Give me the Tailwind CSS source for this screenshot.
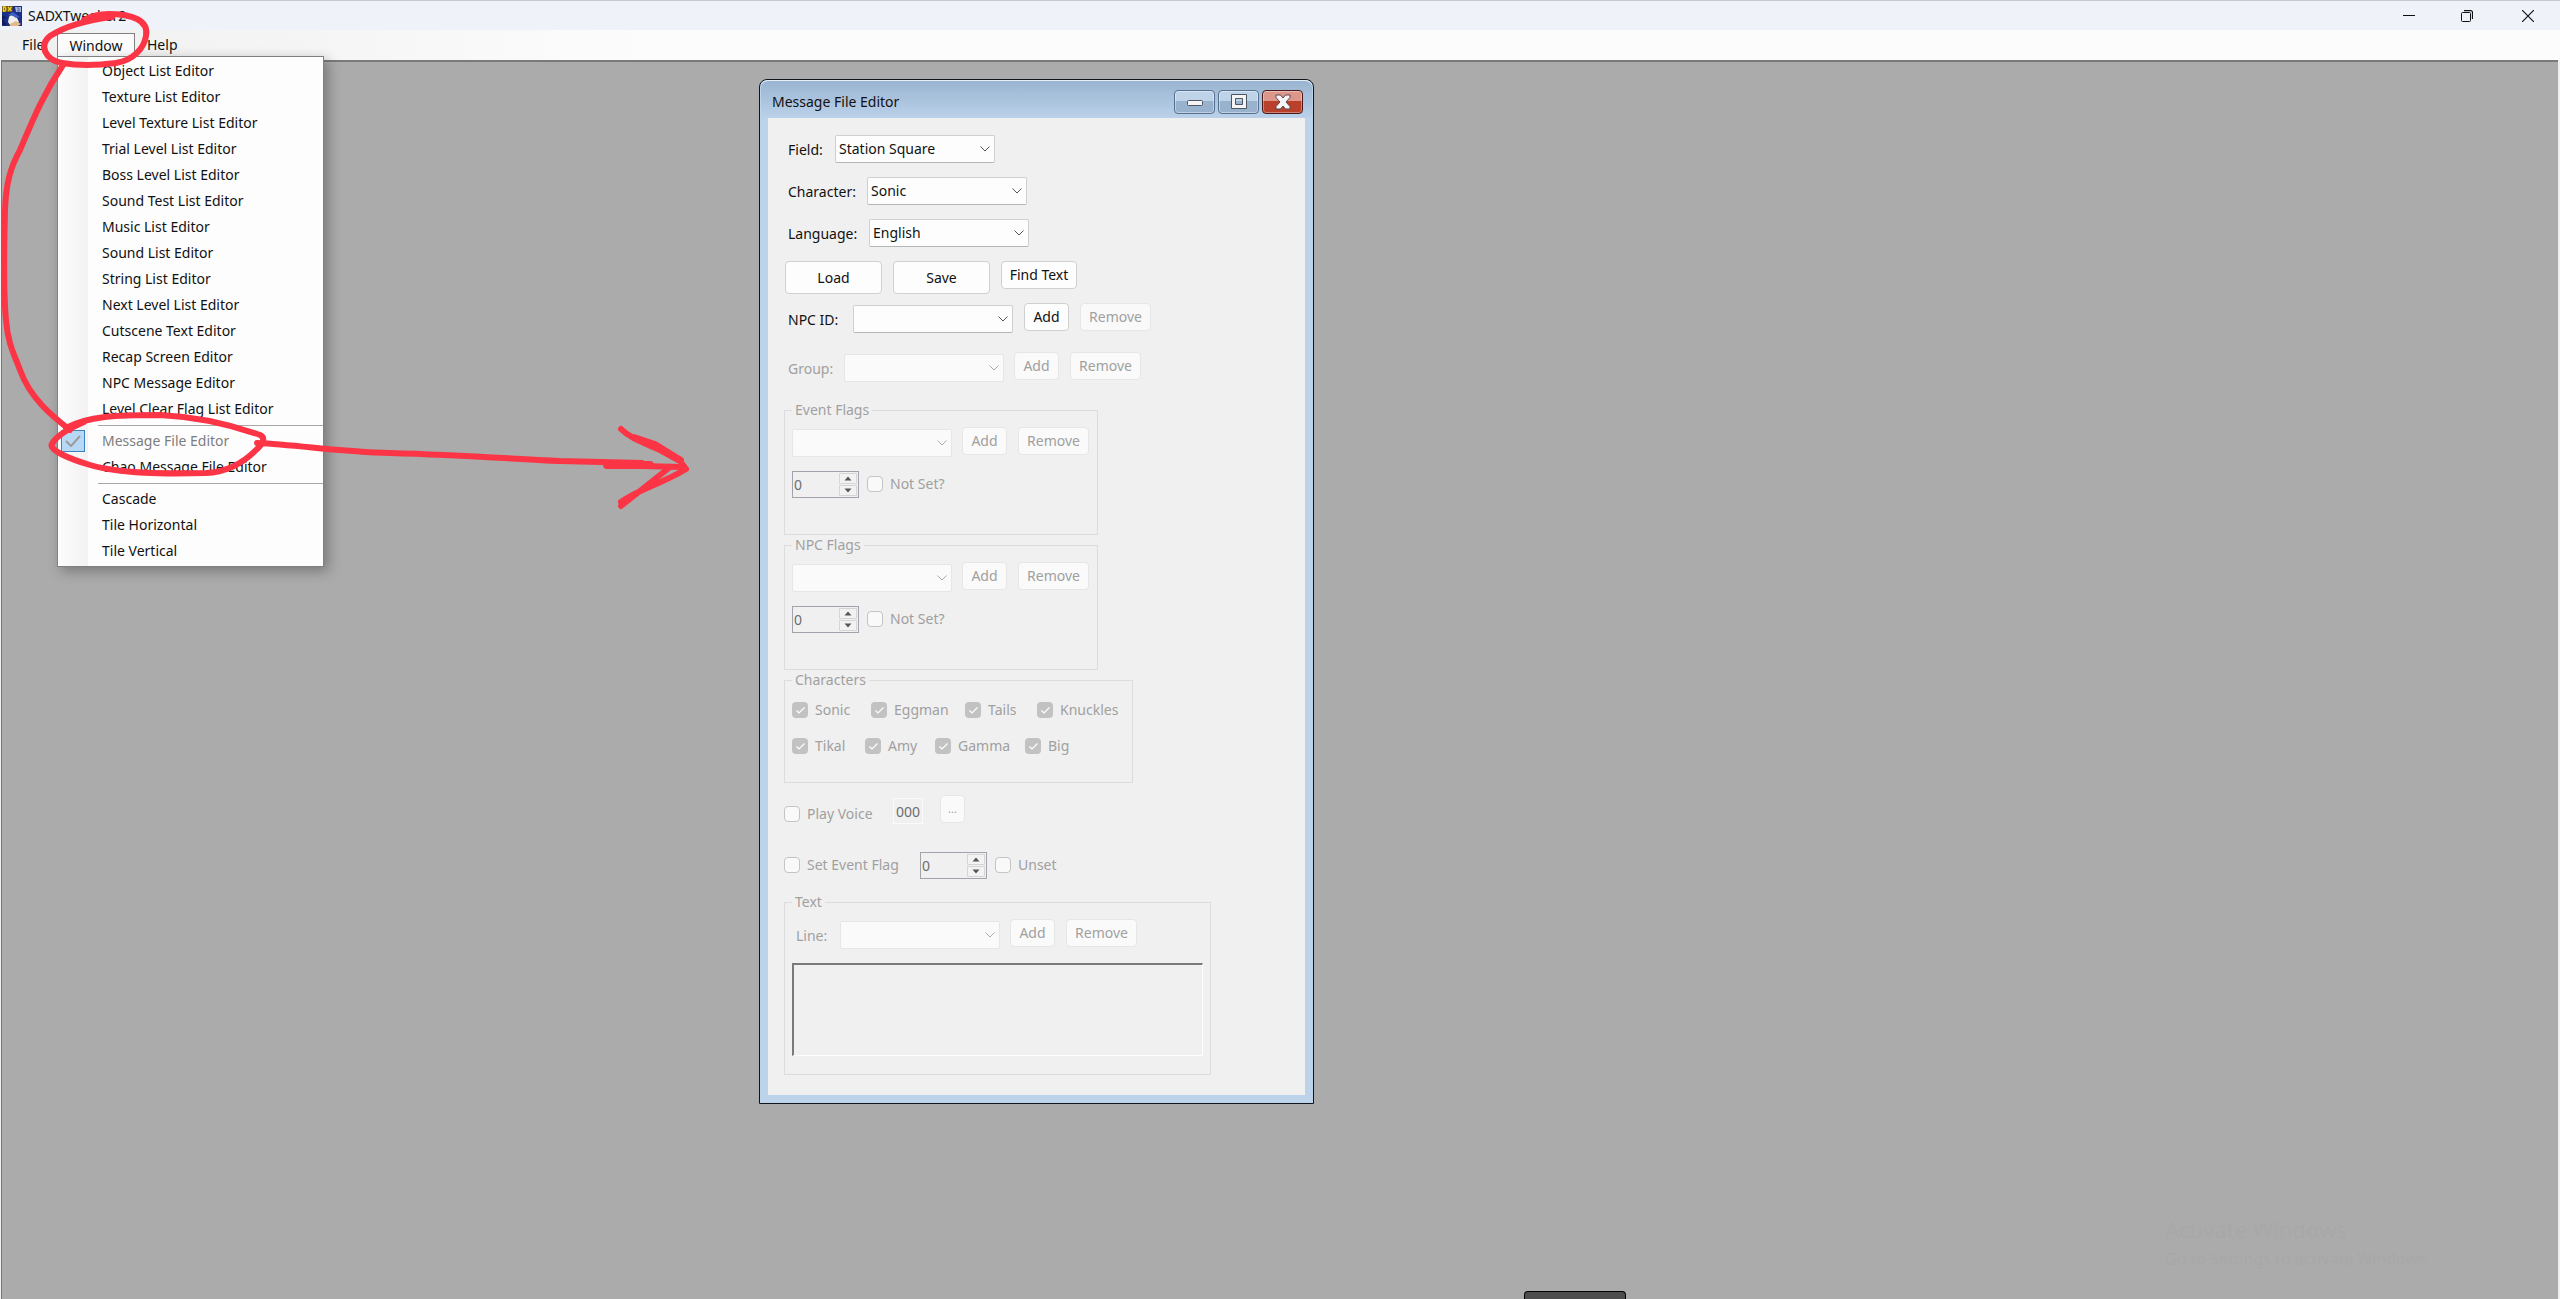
<!DOCTYPE html>
<html lang="en">
<head>
  <meta charset="UTF-8">
  <meta name="viewport" content="width=device-width, initial-scale=1.0">
  <title>SADXTweaker2</title>
  <script src="https://cdn.jsdelivr.net/npm/@tailwindcss/browser@4"></script>
</head>
<body class="relative flex h-screen flex-col overflow-hidden bg-[#f0f0f0] font-['Noto_Sans',sans-serif] text-sm text-[#111111]">
  <!-- Title bar -->
  <header class="flex h-[30px] shrink-0 items-center justify-between border-t border-[#c8c9cd] bg-[#eff3f9]">
    <div class="flex items-center gap-[6px] pl-[2px]">
      <svg class="size-5" viewBox="0 0 20 20">
        <rect width="20" height="20" fill="#1c2f86"/>
        <path d="M0 0h11l-1 6H0z" fill="#6b5a1a"/>
        <path d="M1.500 1v4h1.500l1-2-1-2zM6 1l3.500 4M9.500 1L6 5" fill="none" stroke="#f3cf27" stroke-width="1.300"/>
        <path d="M13 1h6v5h-5z" fill="#a9b6dc"/>
        <path d="M15 2h2v2l-2 1h3" fill="none" stroke="#5a6db4"/>
        <path d="M0 9l5 3-4 1 4 6H0z" fill="#101c5e"/>
        <path d="M7 11c2-3 6-3 8 1l2 4-3 3H8l-2-3z" fill="#f1efe9"/>
        <path d="M8 18l6-3 5 3-3 2H8z" fill="#e3b98b"/>
        <path d="M6 9l5-3 7 5-4 1-3-2z" fill="#3c5fc4"/>
      </svg>
      <h1>SADXTweaker2</h1>
    </div>
    <div class="flex">
      <button class="grid h-[29px] w-[58px] place-items-center" aria-label="Minimize">
        <svg class="size-3" viewBox="0 0 12 12"><path d="M0 5.5h12" stroke="#111"/></svg>
      </button>
      <button class="grid h-[29px] w-[58px] place-items-center" aria-label="Restore">
        <svg class="size-3" viewBox="0 0 12 12" fill="none" stroke="#111"><rect x=".5" y="2.5" width="9" height="9" rx="1"/><path d="M3 .6h6.500a2 2 0 0 1 2 2V9" stroke-width="1.200"/></svg>
      </button>
      <button class="grid h-[29px] w-16 place-items-center" aria-label="Close">
        <svg class="size-3" viewBox="0 0 12 12"><path d="M0 0l12 12M12 0L0 12" stroke="#111" stroke-width="1.200"/></svg>
      </button>
    </div>
  </header>

  <!-- Menu bar -->
  <nav class="flex h-[30px] shrink-0 items-start bg-linear-to-r from-[#efefef] to-[#fcfcfc] to-25% pt-[3px] pl-[13px]">
    <button class="h-6 w-11 pl-[9px] text-left">File</button>
    <div class="relative z-10">
      <button class="h-6 w-[78px] border border-b-0 border-[#808080] bg-[#fcfcfc]">Window</button>
      <ul class="absolute top-[23px] left-0 w-[267px] border border-[#808080] bg-[#fdfdfd] bg-linear-to-r from-[#fcfcfc] to-[#f2f2f2] bg-[length:30px_100%] bg-no-repeat pt-px pb-[2px] shadow-[4px_4px_12px_rgba(0,0,0,0.3)]">
        <li><button class="h-[26px] w-full pl-[44px] text-left">Object List Editor</button></li>
        <li><button class="h-[26px] w-full pl-[44px] text-left">Texture List Editor</button></li>
        <li><button class="h-[26px] w-full pl-[44px] text-left">Level Texture List Editor</button></li>
        <li><button class="h-[26px] w-full pl-[44px] text-left">Trial Level List Editor</button></li>
        <li><button class="h-[26px] w-full pl-[44px] text-left">Boss Level List Editor</button></li>
        <li><button class="h-[26px] w-full pl-[44px] text-left">Sound Test List Editor</button></li>
        <li><button class="h-[26px] w-full pl-[44px] text-left">Music List Editor</button></li>
        <li><button class="h-[26px] w-full pl-[44px] text-left">Sound List Editor</button></li>
        <li><button class="h-[26px] w-full pl-[44px] text-left">String List Editor</button></li>
        <li><button class="h-[26px] w-full pl-[44px] text-left">Next Level List Editor</button></li>
        <li><button class="h-[26px] w-full pl-[44px] text-left">Cutscene Text Editor</button></li>
        <li><button class="h-[26px] w-full pl-[44px] text-left">Recap Screen Editor</button></li>
        <li><button class="h-[26px] w-full pl-[44px] text-left">NPC Message Editor</button></li>
        <li><button class="h-[26px] w-full pl-[44px] text-left">Level Clear Flag List Editor</button></li>
        <li class="mt-[3px] mb-[2px] ml-10 h-px bg-[#a8a8a8]"></li>
        <li>
          <button class="flex h-[26px] w-full items-center gap-[17px] pl-[3px] text-left text-[#7d7d7d]" disabled>
            <span class="grid h-[22px] w-6 place-items-center border border-[#3f80c4] bg-[#b8d9f5]">
              <svg class="h-3 w-4" viewBox="0 0 16 12"><path d="M1 6l5 5L15 1" fill="none" stroke="#9b9b9b" stroke-width="2"/></svg>
            </span>
            Message File Editor
          </button>
        </li>
        <li><button class="h-[26px] w-full pl-[44px] text-left">Chao Message File Editor</button></li>
        <li class="mt-[3px] mb-[2px] ml-10 h-px bg-[#a8a8a8]"></li>
        <li><button class="h-[26px] w-full pl-[44px] text-left">Cascade</button></li>
        <li><button class="h-[26px] w-full pl-[44px] text-left">Tile Horizontal</button></li>
        <li><button class="h-[26px] w-full pl-[44px] text-left">Tile Vertical</button></li>
      </ul>
    </div>
    <button class="h-6 pl-3">Help</button>
  </nav>

  <!-- MDI area -->
  <main class="relative mr-[2px] ml-px min-h-0 grow border-t-2 border-l border-t-[#7a7a7a] border-l-[#777777] bg-[#ababab]">
    <!-- Message File Editor window -->
    <section class="absolute top-[17px] left-[757px] w-[555px] rounded-t-lg border border-[#10151c] bg-[#bcd3ea] px-px">
      <div class="rounded-t-[7px] border-t border-[#e6eef7] bg-linear-to-b from-[#9ab5d1] to-[#bad1e9] bg-[length:100%_37px] bg-no-repeat">
        <div class="flex h-[37px] items-center justify-between pt-[5px] pr-[9px] pb-px pl-[11px]">
          <h2>Message File Editor</h2>
          <div class="flex gap-[3px]">
            <button class="grid h-6 w-[41px] place-items-center rounded-sm border border-[#56708f] bg-linear-to-b from-[#bed2e8] from-45% to-[#98b1cd] to-45% shadow-[inset_0_0_0_1px_rgba(255,255,255,0.4)]" aria-label="Minimize">
              <svg class="size-4" viewBox="0 0 16 16"><rect x=".5" y="6.500" width="15" height="5" rx="1" fill="#f4f4f4" stroke="#4b5566"/></svg>
            </button>
            <button class="grid h-6 w-[41px] place-items-center rounded-sm border border-[#56708f] bg-linear-to-b from-[#bed2e8] from-45% to-[#98b1cd] to-45% shadow-[inset_0_0_0_1px_rgba(255,255,255,0.4)]" aria-label="Maximize">
              <svg class="size-4" viewBox="0 0 16 16"><path d="M.5 .5h15v14H.5zM4.500 4.500v6h7v-6z" fill="#f4f4f4" fill-rule="evenodd" stroke="#4b5566"/></svg>
            </button>
            <button class="grid h-6 w-[41px] place-items-center rounded-sm border border-[#4a1a1a] bg-linear-to-b from-[#dd978a] from-45% to-[#b9402a] to-45% shadow-[inset_0_0_0_1px_rgba(255,255,255,0.35)]" aria-label="Close">
              <svg class="size-4" viewBox="0 0 16 16"><path d="M1 1h4.500L8 4l2.500-3H15v2.500L11 8l4 4.500V15h-4.500L8 12l-2.500 3H1v-2.500L5 8 1 3.500z" fill="#f6f6f6" stroke="#5b4650"/></svg>
            </button>
          </div>
        </div>

        <form class="mx-[7px] mb-2 flex h-[977px] flex-col bg-[#f0f0f0] pt-[17px] pl-4">
          <div class="flex h-[42px] items-start">
            <label for="field" class="w-[51px] pt-[5px] pl-1">Field:</label>
            <div class="relative">
              <select id="field" class="h-7 w-40 appearance-none rounded-xs border border-[#cfcfcf] border-b-[#b5b5b5] bg-[#fdfdfd] pl-[3px]"><option>Station Square</option></select>
              <svg class="pointer-events-none absolute top-[11px] right-[5px] h-[6px] w-[10px]" viewBox="0 0 10 6"><path d="M.5.5L5 5 9.500.5" fill="none" stroke="#555"/></svg>
            </div>
          </div>
          <div class="flex h-[42px] items-start">
            <label for="character" class="w-[83px] pt-[5px] pl-1">Character:</label>
            <div class="relative">
              <select id="character" class="h-7 w-40 appearance-none rounded-xs border border-[#cfcfcf] border-b-[#b5b5b5] bg-[#fdfdfd] pl-[3px]"><option>Sonic</option></select>
              <svg class="pointer-events-none absolute top-[11px] right-[5px] h-[6px] w-[10px]" viewBox="0 0 10 6"><path d="M.5.5L5 5 9.500.5" fill="none" stroke="#555"/></svg>
            </div>
          </div>
          <div class="flex h-[42px] items-start">
            <label for="language" class="w-[85px] pt-[5px] pl-1">Language:</label>
            <div class="relative">
              <select id="language" class="h-7 w-40 appearance-none rounded-xs border border-[#cfcfcf] border-b-[#b5b5b5] bg-[#fdfdfd] pl-[3px]"><option>English</option></select>
              <svg class="pointer-events-none absolute top-[11px] right-[5px] h-[6px] w-[10px]" viewBox="0 0 10 6"><path d="M.5.5L5 5 9.500.5" fill="none" stroke="#555"/></svg>
            </div>
          </div>

          <div class="flex h-[42px] items-start gap-[11px] pl-px">
            <button type="button" class="h-[33px] w-[97px] rounded border border-[#d0d0d0] bg-[#fdfdfd]">Load</button>
            <button type="button" class="h-[33px] w-[97px] rounded border border-[#d0d0d0] bg-[#fdfdfd]">Save</button>
            <button type="button" class="h-7 w-[76px] rounded border border-[#d0d0d0] bg-[#fdfdfd]">Find Text</button>
          </div>

          <div class="flex h-[49px] items-start">
            <label for="npc-id" class="w-[69px] pt-[7px] pl-1">NPC ID:</label>
            <div class="relative pt-[2px]">
              <select id="npc-id" class="h-7 w-40 appearance-none rounded-xs border border-[#cfcfcf] border-b-[#b5b5b5] bg-[#fdfdfd]"></select>
              <svg class="pointer-events-none absolute top-[13px] right-[5px] h-[6px] w-[10px]" viewBox="0 0 10 6"><path d="M.5.5L5 5 9.500.5" fill="none" stroke="#555"/></svg>
            </div>
            <button type="button" class="ml-[11px] h-7 w-[45px] rounded border border-[#d0d0d0] bg-[#fdfdfd]">Add</button>
            <button type="button" class="ml-[11px] h-7 w-[71px] rounded border border-[#e6e6e6] bg-[#f9f9f9] text-[#a0a0a0]" disabled>Remove</button>
          </div>

          <div class="flex h-12 items-start text-[#a0a0a0]">
            <label for="group" class="w-[60px] pt-[7px] pl-1">Group:</label>
            <div class="relative pt-[2px]">
              <select id="group" class="h-7 w-40 appearance-none rounded-xs border border-[#e6e6e6] bg-[#fafafa] opacity-100" disabled></select>
              <svg class="pointer-events-none absolute top-[13px] right-[5px] h-[6px] w-[10px]" viewBox="0 0 10 6"><path d="M.5.5L5 5 9.500.5" fill="none" stroke="#aaa"/></svg>
            </div>
            <button type="button" class="ml-[10px] h-7 w-[45px] rounded border border-[#e6e6e6] bg-[#fafafa]" disabled>Add</button>
            <button type="button" class="ml-[11px] h-7 w-[71px] rounded border border-[#e6e6e6] bg-[#fafafa]" disabled>Remove</button>
          </div>

          <fieldset class="h-[135px] w-[314px] border border-[#dcdcdc] px-[7px] text-[#a0a0a0]" disabled>
            <legend class="h-5 px-[3px] leading-5">Event Flags</legend>
            <div class="flex items-start pt-[7px]">
              <div class="relative pt-[2px]">
                <select aria-label="Event flag" class="h-7 w-40 appearance-none rounded-xs border border-[#e6e6e6] bg-[#fafafa] opacity-100"></select>
                <svg class="pointer-events-none absolute top-[13px] right-[5px] h-[6px] w-[10px]" viewBox="0 0 10 6"><path d="M.5.5L5 5 9.500.5" fill="none" stroke="#aaa"/></svg>
              </div>
              <button type="button" class="ml-[10px] h-7 w-[45px] rounded border border-[#e6e6e6] bg-[#fafafa]">Add</button>
              <button type="button" class="ml-[11px] h-7 w-[71px] rounded border border-[#e6e6e6] bg-[#fafafa]">Remove</button>
            </div>
            <div class="flex items-start pt-[14px]">
              <div class="relative h-[27px]">
                <input type="number" value="0" aria-label="Event flag value" class="h-[27px] w-[67px] border border-[#a3a3ad] pl-px text-[#6d6d6d] [appearance:textfield]">
                <svg class="pointer-events-none absolute top-[2px] right-[2px] h-[23px] w-[18px]" viewBox="0 0 18 23"><path d="M.5.5h17v10H.5zM.5 12.500h17v10H.5z" fill="#f2f2f2" stroke="#d5d5d5"/><path d="M5.500 7.500l3.500-4 3.500 4zM5.500 15.500l3.500 4 3.500-4z" fill="#555"/></svg>
              </div>
              <label class="flex h-[26px] items-center gap-[7px] pl-2"><input type="checkbox" class="size-4 appearance-none rounded-sm border border-[#c4c4c4] bg-[#f9f9f9]">Not Set?</label>
            </div>
          </fieldset>

          <fieldset class="h-[135px] w-[314px] border border-[#dcdcdc] px-[7px] text-[#a0a0a0]" disabled>
            <legend class="h-5 px-[3px] leading-5">NPC Flags</legend>
            <div class="flex items-start pt-[7px]">
              <div class="relative pt-[2px]">
                <select aria-label="NPC flag" class="h-7 w-40 appearance-none rounded-xs border border-[#e6e6e6] bg-[#fafafa] opacity-100"></select>
                <svg class="pointer-events-none absolute top-[13px] right-[5px] h-[6px] w-[10px]" viewBox="0 0 10 6"><path d="M.5.5L5 5 9.500.5" fill="none" stroke="#aaa"/></svg>
              </div>
              <button type="button" class="ml-[10px] h-7 w-[45px] rounded border border-[#e6e6e6] bg-[#fafafa]">Add</button>
              <button type="button" class="ml-[11px] h-7 w-[71px] rounded border border-[#e6e6e6] bg-[#fafafa]">Remove</button>
            </div>
            <div class="flex items-start pt-[14px]">
              <div class="relative h-[27px]">
                <input type="number" value="0" aria-label="NPC flag value" class="h-[27px] w-[67px] border border-[#a3a3ad] pl-px text-[#6d6d6d] [appearance:textfield]">
                <svg class="pointer-events-none absolute top-[2px] right-[2px] h-[23px] w-[18px]" viewBox="0 0 18 23"><path d="M.5.5h17v10H.5zM.5 12.500h17v10H.5z" fill="#f2f2f2" stroke="#d5d5d5"/><path d="M5.500 7.500l3.500-4 3.500 4zM5.500 15.500l3.500 4 3.500-4z" fill="#555"/></svg>
              </div>
              <label class="flex h-[26px] items-center gap-[7px] pl-2"><input type="checkbox" class="size-4 appearance-none rounded-sm border border-[#c4c4c4] bg-[#f9f9f9]">Not Set?</label>
            </div>
          </fieldset>

          <fieldset class="h-[113px] w-[349px] border border-[#dcdcdc] px-[7px] text-[#a0a0a0]" disabled>
            <legend class="h-5 px-[3px] leading-5">Characters</legend>
            <div class="flex h-9 items-center pt-1">
              <label class="relative flex w-[79px] items-center gap-[7px]"><input type="checkbox" checked class="size-4 appearance-none rounded-sm bg-[#c2c2c2]"><svg class="absolute left-1 h-[7px] w-[9px]" viewBox="0 0 9 7"><path d="M.5 3.500L3 6l5.500-5.500" fill="none" stroke="#fff" stroke-width="1.200"/></svg>Sonic</label>
              <label class="relative flex w-[94px] items-center gap-[7px]"><input type="checkbox" checked class="size-4 appearance-none rounded-sm bg-[#c2c2c2]"><svg class="absolute left-1 h-[7px] w-[9px]" viewBox="0 0 9 7"><path d="M.5 3.500L3 6l5.500-5.500" fill="none" stroke="#fff" stroke-width="1.200"/></svg>Eggman</label>
              <label class="relative flex w-[72px] items-center gap-[7px]"><input type="checkbox" checked class="size-4 appearance-none rounded-sm bg-[#c2c2c2]"><svg class="absolute left-1 h-[7px] w-[9px]" viewBox="0 0 9 7"><path d="M.5 3.500L3 6l5.500-5.500" fill="none" stroke="#fff" stroke-width="1.200"/></svg>Tails</label>
              <label class="relative flex items-center gap-[7px]"><input type="checkbox" checked class="size-4 appearance-none rounded-sm bg-[#c2c2c2]"><svg class="absolute left-1 h-[7px] w-[9px]" viewBox="0 0 9 7"><path d="M.5 3.500L3 6l5.500-5.500" fill="none" stroke="#fff" stroke-width="1.200"/></svg>Knuckles</label>
            </div>
            <div class="flex h-9 items-center pt-1">
              <label class="relative flex w-[73px] items-center gap-[7px]"><input type="checkbox" checked class="size-4 appearance-none rounded-sm bg-[#c2c2c2]"><svg class="absolute left-1 h-[7px] w-[9px]" viewBox="0 0 9 7"><path d="M.5 3.500L3 6l5.500-5.500" fill="none" stroke="#fff" stroke-width="1.200"/></svg>Tikal</label>
              <label class="relative flex w-[70px] items-center gap-[7px]"><input type="checkbox" checked class="size-4 appearance-none rounded-sm bg-[#c2c2c2]"><svg class="absolute left-1 h-[7px] w-[9px]" viewBox="0 0 9 7"><path d="M.5 3.500L3 6l5.500-5.500" fill="none" stroke="#fff" stroke-width="1.200"/></svg>Amy</label>
              <label class="relative flex w-[90px] items-center gap-[7px]"><input type="checkbox" checked class="size-4 appearance-none rounded-sm bg-[#c2c2c2]"><svg class="absolute left-1 h-[7px] w-[9px]" viewBox="0 0 9 7"><path d="M.5 3.500L3 6l5.500-5.500" fill="none" stroke="#fff" stroke-width="1.200"/></svg>Gamma</label>
              <label class="relative flex items-center gap-[7px]"><input type="checkbox" checked class="size-4 appearance-none rounded-sm bg-[#c2c2c2]"><svg class="absolute left-1 h-[7px] w-[9px]" viewBox="0 0 9 7"><path d="M.5 3.500L3 6l5.500-5.500" fill="none" stroke="#fff" stroke-width="1.200"/></svg>Big</label>
            </div>
          </fieldset>

          <div class="flex h-14 items-start pt-3 text-[#a0a0a0]">
            <label class="flex w-[109px] items-center gap-[7px] pt-[9px]"><input type="checkbox" disabled class="size-4 appearance-none rounded-sm border border-[#c4c4c4] bg-[#f9f9f9]">Play Voice</label>
            <input type="text" value="000" aria-label="Voice number" disabled class="mt-[3px] h-[26px] w-[30px] border border-[#fafafa] text-center text-[#6d6d6d]">
            <button type="button" class="ml-[17px] h-7 w-[25px] rounded border border-[#e6e6e6] bg-[#fafafa] text-[11px]" disabled>...</button>
          </div>

          <div class="flex h-[53px] items-start pt-[13px] text-[#a0a0a0]">
            <label class="flex h-[26px] w-[136px] items-center gap-[7px]"><input type="checkbox" disabled class="size-4 appearance-none rounded-sm border border-[#c4c4c4] bg-[#f9f9f9]">Set Event Flag</label>
            <div class="relative h-[27px]">
              <input type="number" value="0" aria-label="Event flag to set" disabled class="h-[27px] w-[67px] border border-[#a3a3ad] pl-px text-[#6d6d6d] [appearance:textfield]">
              <svg class="pointer-events-none absolute top-[2px] right-[2px] h-[23px] w-[18px]" viewBox="0 0 18 23"><path d="M.5.5h17v10H.5zM.5 12.500h17v10H.5z" fill="#f2f2f2" stroke="#d5d5d5"/><path d="M5.500 7.500l3.500-4 3.500 4zM5.500 15.500l3.500 4 3.500-4z" fill="#555"/></svg>
            </div>
            <label class="flex h-[26px] items-center gap-[7px] pl-2"><input type="checkbox" disabled class="size-4 appearance-none rounded-sm border border-[#c4c4c4] bg-[#f9f9f9]">Unset</label>
          </div>

          <fieldset class="h-[183px] w-[427px] border border-[#dcdcdc] px-[7px] text-[#a0a0a0]" disabled>
            <legend class="h-5 px-[3px] leading-5">Text</legend>
            <div class="flex items-start pt-[7px]">
              <label for="line" class="w-12 pt-[7px] pl-1">Line:</label>
              <div class="relative pt-[2px]">
                <select id="line" class="h-7 w-40 appearance-none rounded-xs border border-[#e6e6e6] bg-[#fafafa] opacity-100"></select>
                <svg class="pointer-events-none absolute top-[13px] right-[5px] h-[6px] w-[10px]" viewBox="0 0 10 6"><path d="M.5.5L5 5 9.500.5" fill="none" stroke="#aaa"/></svg>
              </div>
              <button type="button" class="ml-[10px] h-7 w-[45px] rounded border border-[#e6e6e6] bg-[#fafafa]">Add</button>
              <button type="button" class="ml-[11px] h-7 w-[71px] rounded border border-[#e6e6e6] bg-[#fafafa]">Remove</button>
            </div>
            <textarea aria-label="Message text" class="mt-[14px] block h-[93px] w-full resize-none border-t-2 border-r border-b border-l-2 border-t-[#7a7a7a] border-r-white border-b-white border-l-[#7a7a7a]"></textarea>
          </fieldset>
        </form>
      </div>
    </section>

    <!-- Activation watermark -->
    <div class="absolute right-[110px] bottom-[26px] w-[283px] text-[#a8a8a8]">
      <p class="text-[22px] leading-8">Activate Windows</p>
      <p class="text-base leading-7 whitespace-nowrap">Go to Settings to activate Windows.</p>
    </div>

    <!-- Taskbar preview peeking in from below -->
    <div class="absolute bottom-0 left-[1522px] h-2 w-[102px] rounded-t-sm border border-b-0 border-black bg-[#4d4d4d]"></div>
  </main>

  <!-- Red pen marks -->
  <svg class="pointer-events-none absolute top-0 left-0 z-20 h-[540px] w-[720px]" viewBox="0 0 720 540" fill="none" stroke="#fb3545" stroke-width="6" stroke-linecap="round" stroke-linejoin="round">
    <path d="M112 17C88 20 64 27 50 36C38 46 46 60 62 63C80 66 100 65 116 63C134 60 144 48 146 36C149 20 132 14 108 14C98 14 90 17 84 20"/>
    <path d="M63 65C42 96 32 122 20 150C10 168 6 184 5 210C4 250 4 300 6 320C8 344 14 354 20 370C30 398 52 416 70 430"/>
    <path d="M66 428C88 416 116 415 160 415C206 417 240 428 260 435C266 438 263 444 256 450C242 464 226 472 206 473C166 474 120 474 90 465C70 459 48 450 52 444C56 436 70 428 84 422"/>
    <path d="M257 443C300 445 340 452 390 453C460 455 500 458 560 461L642 463M607 465L680 467"/>
    <path d="M621 429C630 438 642 442 660 450L680 461L686 469C662 484 640 488 621 502M621 506L645 487L670 467M634 437L655 444L681 460"/>
    <path d="M607 465L650 465" stroke-width="8"/>
  </svg>
</body>
</html>
